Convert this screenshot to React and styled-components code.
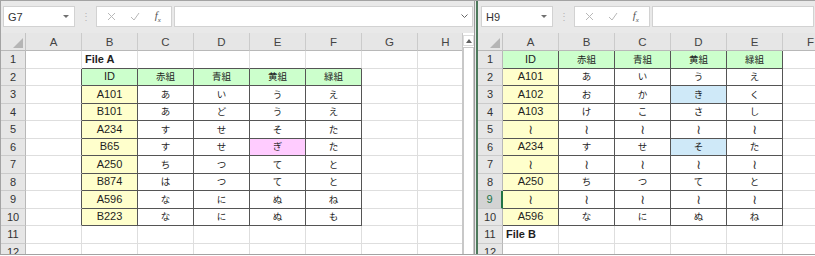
import React from 'react';
import styled, { createGlobalStyle } from 'styled-components';

const Global = createGlobalStyle`
  html, body { margin: 0; padding: 0; background: #fff; }
  body { font-family: "Liberation Sans", "Noto Sans CJK JP", sans-serif; }
  * { box-sizing: border-box; }
`;

const Frame = styled.div`
  width: 815px;
  height: 255px;
  border-top: 1px solid #a3a3a3;
  border-bottom: 1px solid #a3a3a3;
  border-left: 1px solid #a3a3a3;
  display: flex;
  overflow: hidden;
  background: #fff;
`;

const Pane = styled.div`
  width: ${(p) => p.$w}px;
  flex: none;
  display: flex;
  flex-direction: column;
  overflow: hidden;
`;

const Divider = styled.div`
  width: 4px;
  flex: none;
  background: #e9e9e9;
  border-left: 1px solid #9b9b9b;
  border-right: 2px solid #4d7a5c;
`;

const FormulaBar = styled.div`
  height: 32px;
  flex: none;
  background: #e9e9e9;
  display: flex;
  align-items: flex-start;
  padding: 5px 1px 0 ${(p) => p.$pl}px;
`;

const NameBox = styled.div`
  width: 72px;
  height: 21px;
  background: #fff;
  border: 1px solid #d2d2d2;
  display: flex;
  align-items: center;
  justify-content: space-between;
  padding: 0 5px 0 4px;
  font-size: 11px;
  color: #333;
`;

const Caret = styled.span`
  width: 0;
  height: 0;
  border-left: 3px solid transparent;
  border-right: 3px solid transparent;
  border-top: 3px solid #707070;
`;

const Dots = styled.div`
  width: 21px;
  height: 21px;
  display: flex;
  align-items: center;
  justify-content: center;
  color: #b5b5b5;
  font-size: 10px;
`;

const FxBox = styled.div`
  width: 76px;
  height: 21px;
  background: #fff;
  border: 1px solid #d2d2d2;
  display: flex;
  align-items: center;
  justify-content: space-around;
  padding: 0 3px;
  margin-right: 2px;
`;

const FxText = styled.span`
  font-family: "Liberation Serif", serif;
  font-style: italic;
  font-size: 11px;
  color: #555;
  sub { font-size: 7px; }
`;

const Input = styled.div`
  flex: 1;
  height: 21px;
  background: #fff;
  border: 1px solid #d2d2d2;
  display: flex;
  align-items: center;
  justify-content: flex-end;
  padding-right: 4px;
`;

const Body = styled.div`
  flex: 1;
  display: flex;
  min-height: 0;
`;

const Grid = styled.div`
  flex: 1;
  display: grid;
  grid-template-columns: 25px repeat(${(p) => p.$cols}, 56px);
  grid-template-rows: 18px repeat(12, 17.5px);
  overflow: hidden;
  min-width: 0;
`;

const Corner = styled.div`
  background: #e6e6e6;
  border-right: 1px solid #c4c4c4;
  border-bottom: 1px solid #b8b8b8;
  display: flex;
  align-items: flex-end;
  justify-content: flex-end;
  padding: 0 2px 2px 0;
`;

const ColHead = styled.div`
  background: #e6e6e6;
  border-right: 1px solid #cbcbcb;
  border-bottom: 1px solid #b8b8b8;
  display: flex;
  align-items: center;
  justify-content: center;
  font-size: 11.5px;
  color: #444;
`;

const RowHead = styled.div`
  background: ${(p) => (p.$sel ? '#d3d3d3' : '#e6e6e6')};
  border-bottom: 1px solid #cbcbcb;
  border-right: ${(p) => (p.$sel ? '2px solid #217346' : '1px solid #b8b8b8')};
  display: flex;
  align-items: center;
  justify-content: center;
  font-size: 11px;
  color: ${(p) => (p.$sel ? '#217346' : '#333')};
`;

const Cell = styled.div`
  background: ${(p) => p.$fill || '#fff'};
  border-right: 1px solid ${(p) => (p.$dr ? '#555' : '#dedede')};
  border-bottom: 1px solid ${(p) => (p.$db ? '#555' : '#dedede')};
  display: flex;
  align-items: center;
  justify-content: ${(p) => (p.$left ? 'flex-start' : 'center')};
  padding-left: ${(p) => (p.$left ? '3px' : '0')};
  font-family: ${(p) => (p.$wave ? '"DejaVu Sans", sans-serif' : 'inherit')};
  font-size: ${(p) => (p.$wave ? '13px' : p.$cjk ? '9.5px' : '11px')};
  line-height: 1;
  font-weight: ${(p) => (p.$bold ? 700 : 400)};
  color: ${(p) => (p.$wave ? '#333' : '#1e1e1e')};
  white-space: nowrap;
`;

const Scroll = styled.div`
  width: 12px;
  flex: none;
  background: #fff;
  border-left: 1px solid #c8c8c8;
  display: flex;
  flex-direction: column;
  padding-top: 2px;
`;

const ScrollBtn = styled.div`
  height: 11px;
  display: flex;
  align-items: center;
  justify-content: center;
  border: 1px solid #dcdcdc;
`;

const Thumb = styled.div`
  flex: 1;
  border: 1px solid #c8c8c8;
  border-bottom: none;
  margin-top: 1px;
`;

const GREEN = '#ccffcc';
const YELLOW = '#ffffcc';
const PINK = '#ffccff';
const BLUE = '#cfe9f8';
const LETTERS = ['A', 'B', 'C', 'D', 'E', 'F', 'G', 'H'];
const HEAD = ['ID', '赤組', '青組', '黄組', '緑組'];
const W = '≀';

const isCjk = (s) => /[^\x00-\x7f]/.test(s);

function FormulaRow({ name, pl, chevron }) {
  return (
    <FormulaBar $pl={pl}>
      <NameBox>
        <span>{name}</span>
        <Caret />
      </NameBox>
      <Dots>⋮</Dots>
      <FxBox>
        <svg width="9" height="9" viewBox="0 0 9 9">
          <path d="M1 1 L8 8 M8 1 L1 8" stroke="#b8b8b8" strokeWidth="1" fill="none" />
        </svg>
        <svg width="10" height="9" viewBox="0 0 10 9">
          <path d="M1 5 L4 8 L9 1" stroke="#b8b8b8" strokeWidth="1" fill="none" />
        </svg>
        <FxText>
          f<sub>x</sub>
        </FxText>
      </FxBox>
      <Input>
        {chevron && (
          <svg width="7" height="5" viewBox="0 0 7 5">
            <path d="M0.5 0.5 L3.5 3.5 L6.5 0.5" stroke="#666" strokeWidth="1" fill="none" />
          </svg>
        )}
      </Input>
    </FormulaBar>
  );
}

function Sheet({ cols, top, left, data, fills, texts, selRow }) {
  const inTable = (r, c) =>
    r >= top && r < top + 1 + data.length && c >= left && c < left + 5;
  const cells = [];
  cells.push(
    <Corner key="corner">
      <svg width="10" height="10" viewBox="0 0 10 10">
        <polygon points="10,0 10,10 0,10" fill="#b5b5b5" />
      </svg>
    </Corner>
  );
  for (let c = 0; c < cols; c++) cells.push(<ColHead key={'h' + c}>{LETTERS[c]}</ColHead>);
  for (let r = 1; r <= 12; r++) {
    cells.push(
      <RowHead key={'r' + r} $sel={selRow === r}>
        {r}
      </RowHead>
    );
    for (let c = 0; c < cols; c++) {
      let text = '';
      let fill;
      if (inTable(r, c)) {
        const i = r - top;
        const j = c - left;
        if (i === 0) {
          text = HEAD[j];
          fill = GREEN;
        } else {
          text = data[i - 1][j];
          if (j === 0) fill = YELLOW;
          const f = fills[`${i - 1},${j}`];
          if (f) fill = f;
        }
      }
      const t = texts[`${r},${c}`];
      const dr = inTable(r, c) || inTable(r, c + 1);
      const db = inTable(r, c) || inTable(r + 1, c);
      cells.push(
        <Cell
          key={`${r}-${c}`}
          $fill={fill}
          $dr={dr}
          $db={db}
          $cjk={text && isCjk(text)}
          $wave={text === W}
          $bold={!!t}
          $left={!!t}
        >
          {t || text}
        </Cell>
      );
    }
  }
  return <Grid $cols={cols}>{cells}</Grid>;
}

const leftData = [
  ['A101', 'あ', 'い', 'う', 'え'],
  ['B101', 'あ', 'ど', 'う', 'え'],
  ['A234', 'す', 'せ', 'そ', 'た'],
  ['B65', 'す', 'せ', 'ぎ', 'た'],
  ['A250', 'ち', 'つ', 'て', 'と'],
  ['B874', 'は', 'つ', 'て', 'と'],
  ['A596', 'な', 'に', 'ぬ', 'ね'],
  ['B223', 'な', 'に', 'ぬ', 'も'],
];

const rightData = [
  ['A101', 'あ', 'い', 'う', 'え'],
  ['A102', 'お', 'か', 'き', 'く'],
  ['A103', 'け', 'こ', 'さ', 'し'],
  [W, W, W, W, W],
  ['A234', 'す', 'せ', 'そ', 'た'],
  [W, W, W, W, W],
  ['A250', 'ち', 'つ', 'て', 'と'],
  [W, W, W, W, W],
  ['A596', 'な', 'に', 'ぬ', 'ね'],
];

export default function App() {
  return (
    <>
      <Global />
      <Frame>
        <Pane $w={473}>
          <FormulaRow name="G7" pl={2} chevron />
          <Body>
            <Sheet
              cols={8}
              top={2}
              left={1}
              data={leftData}
              fills={{ '3,3': PINK }}
              texts={{ '1,1': 'File A' }}
            />
            <Scroll>
              <ScrollBtn>
                <svg width="6" height="4" viewBox="0 0 6 4">
                  <polygon points="3,0 6,4 0,4" fill="#606060" />
                </svg>
              </ScrollBtn>
              <Thumb />
            </Scroll>
          </Body>
        </Pane>
        <Divider />
        <Pane $w={337}>
          <FormulaRow name="H9" pl={3} />
          <Body>
            <Sheet
              cols={6}
              top={1}
              left={0}
              data={rightData}
              fills={{ '1,3': BLUE, '4,3': BLUE }}
              texts={{ '11,0': 'File B' }}
              selRow={9}
            />
          </Body>
        </Pane>
      </Frame>
    </>
  );
}
